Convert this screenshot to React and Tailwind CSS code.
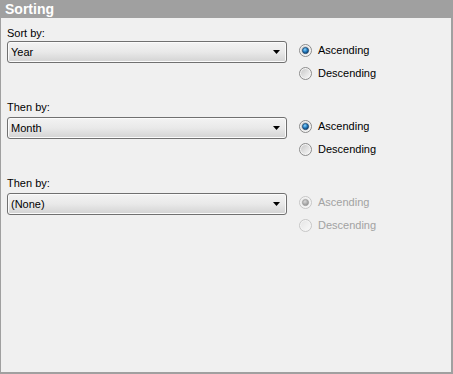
import React from "react";

function Radio({ checked, disabled, label }) {
  const ring = disabled ? "#c6c6c6" : "#8a8a8a";
  return (
    <div className="flex h-[23px] items-center">
      <svg width="13" height="13" viewBox="0 0 13 13" className="shrink-0">
        <defs>
          <linearGradient id={`f${disabled ? "d" : "n"}`} x1="0" y1="0" x2="1" y2="1">
            <stop offset="0" stopColor={disabled ? "#e6e6e6" : "#c9c9c9"} />
            <stop offset="1" stopColor={disabled ? "#f8f8f8" : "#f7f7f7"} />
          </linearGradient>
          <radialGradient id="dotn" cx="0.4" cy="0.35" r="0.7">
            <stop offset="0" stopColor="#8fd6ff" />
            <stop offset="0.5" stopColor="#2680c4" />
            <stop offset="1" stopColor="#0c3560" />
          </radialGradient>
          <radialGradient id="dotd" cx="0.4" cy="0.35" r="0.7">
            <stop offset="0" stopColor="#d8d8d8" />
            <stop offset="1" stopColor="#8e8e8e" />
          </radialGradient>
        </defs>
        <circle cx="6.5" cy="6.5" r="6" fill="#f4f4f4" stroke={ring} strokeWidth="1" />
        <circle cx="6.5" cy="6.5" r="4.5" fill={`url(#f${disabled ? "d" : "n"})`} />
        {checked && (
          <circle
            cx="6.5"
            cy="6.5"
            r="3.1"
            fill={disabled ? "url(#dotd)" : "url(#dotn)"}
            stroke={disabled ? "#9a9a9a" : "#173f66"}
            strokeWidth="0.7"
          />
        )}
      </svg>
      <span
        className={`ml-[6px] text-[11px] leading-[13px] ${
          disabled ? "text-[#a2a2a2]" : "text-black"
        }`}
      >
        {label}
      </span>
    </div>
  );
}

function Dropdown({ value }) {
  return (
    <div className="relative flex h-[22px] w-[280px] shrink-0 items-center rounded-[3px] border border-[#707070] bg-gradient-to-b from-[#f3f3f3] via-[#e9e9e9] to-[#d3d3d3] pl-[3px] shadow-[inset_0_0_0_1px_#fbfbfb]">
      <span className="text-[11px] leading-[13px] text-black">{value}</span>
      <svg
        width="7"
        height="4"
        viewBox="0 0 7 4"
        className="absolute right-[6px] top-[8px]"
      >
        <path d="M0 0 H7 L3.5 4 Z" fill="#000" />
      </svg>
    </div>
  );
}

function Section({ label, value, disabled, first }) {
  return (
    <div className={first ? "" : "mt-[14px]"}>
      <div
        className={`${first ? "h-[16px]" : "h-[18px]"} text-[11px] leading-[16px] text-black`}
      >
        {label}
      </div>
      <div className="flex items-start">
        <Dropdown value={value} />
        <div className="ml-[12px] mt-[-2px] flex flex-col">
          <Radio checked disabled={disabled} label="Ascending" />
          <Radio disabled={disabled} label="Descending" />
        </div>
      </div>
    </div>
  );
}

export default function App() {
  return (
    <div
      className="flex h-[374px] w-[453px] flex-col bg-[#f0f0f0]"
      style={{ fontFamily: '"Liberation Sans", Arial, sans-serif' }}
    >
      <div className="h-[18px] shrink-0 bg-[#a0a0a0] pl-[5px] text-[14px] font-bold leading-[18px] text-white">
        Sorting
      </div>
      <div className="flex-1 border-b-2 border-l border-r-2 border-[#a0a0a0] pl-[6px] pt-[7px]">
        <Section first label="Sort by:" value="Year" />
        <Section label="Then by:" value="Month" />
        <Section label="Then by:" value="(None)" disabled />
      </div>
    </div>
  );
}
